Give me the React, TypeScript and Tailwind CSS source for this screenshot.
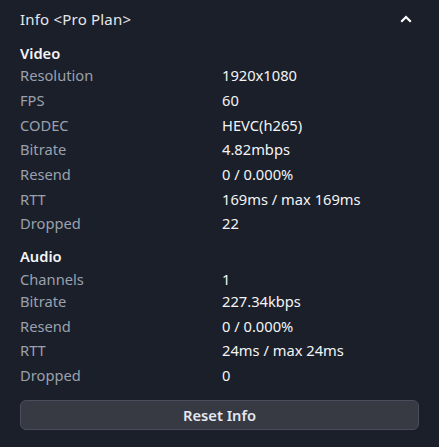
import React from "react";

const font = { fontFamily: '"Noto Sans", "Open Sans", sans-serif' };

function Row({ label, value, cls = "" }: { label: string; value: string; cls?: string }) {
  return (
    <div className={`flex h-[24.7px] items-center ${cls}`}>
      <div className="w-[202px] text-[#9aa1ad]">{label}</div>
      <div className="text-[#f3f4f6]">{value}</div>
    </div>
  );
}

export default function App() {
  return (
    <div className="w-[439px] h-[447px] bg-[#1b1f2a] px-5 text-[14.7px] leading-5" style={font}>
      <div className="flex h-[38px] items-center justify-between">
        <span className="text-[15px] tracking-[0.2px] text-[#e5e7eb]">Info &lt;Pro Plan&gt;</span>
        <svg width="14" height="14" viewBox="0 0 14 14" className="mr-[6px]">
          <path d="M3 9 L7 5 L11 9" fill="none" stroke="#ffffff" strokeWidth="2.2" strokeLinecap="square" />
        </svg>
      </div>
      <div className="mt-[5px] h-5 font-semibold text-[#f3f4f6]">Video</div>
      <Row label="Resolution" value="1920x1080" />
      <Row label="FPS" value="60" />
      <Row label="CODEC" value="HEVC(h265)" />
      <Row label="Bitrate" value="4.82mbps" />
      <Row label="Resend" value="0 / 0.000%" />
      <Row label="RTT" value="169ms / max 169ms" />
      <Row label="Dropped" value="22" />
      <div className="mt-[10.5px] h-5 font-semibold text-[#f3f4f6]">Audio</div>
      <Row label="Channels" value="1" />
      <Row label="Bitrate" value="227.34kbps" cls="-mt-[2.3px]" />
      <Row label="Resend" value="0 / 0.000%" />
      <Row label="RTT" value="24ms / max 24ms" cls="-mt-[0.4px]" />
      <Row label="Dropped" value="0" />
      <button className="mt-[12.5px] flex h-[30px] w-full items-center justify-center rounded-[6px] border border-[#4a4e5c] bg-[#373a42] font-semibold text-[#e3e7f0]">
        Reset Info
      </button>
    </div>
  );
}
